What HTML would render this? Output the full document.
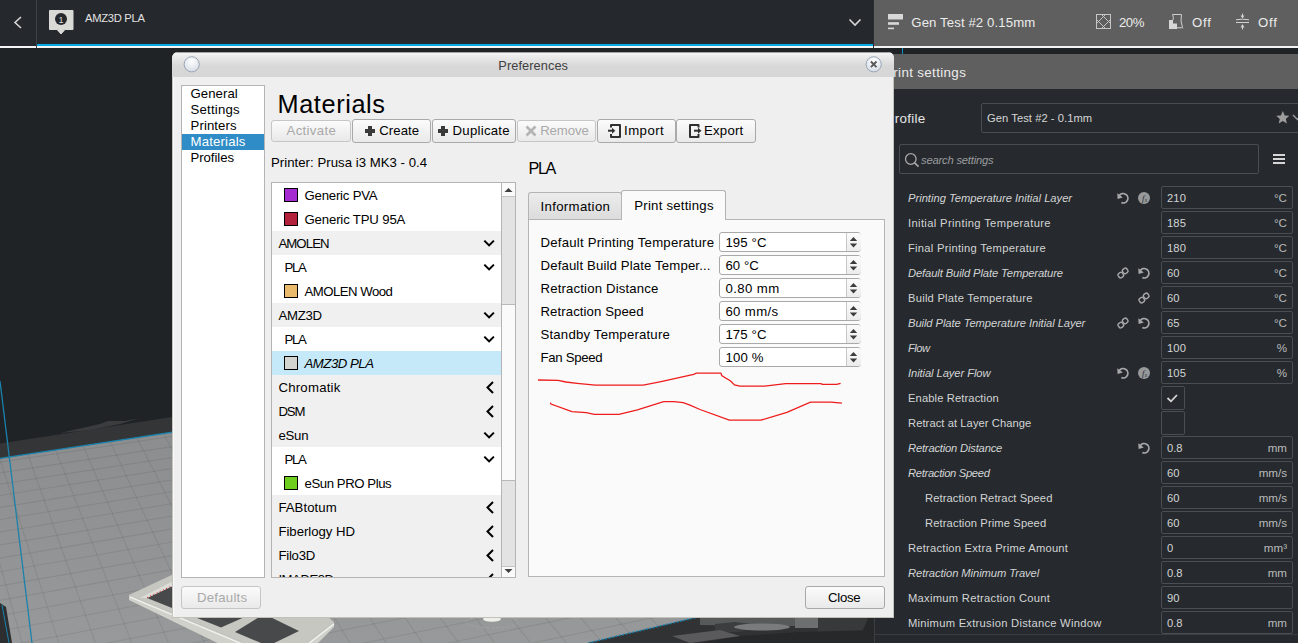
<!DOCTYPE html>
<html><head><meta charset="utf-8">
<style>
html,body{margin:0;padding:0;width:1298px;height:643px;overflow:hidden;background:#1f2326;font-family:"Liberation Sans",sans-serif;}
.a{position:absolute;}
.t{position:absolute;white-space:nowrap;line-height:1;}
svg{position:absolute;overflow:visible;}
</style></head><body>

<svg style="left:0;top:0" width="1298" height="643">
<defs><linearGradient id="flg" x1="0" y1="430" x2="0" y2="643" gradientUnits="userSpaceOnUse"><stop offset="0" stop-color="#8c8d8e"/><stop offset="1" stop-color="#98999a"/></linearGradient><clipPath id="fl"><polygon points="0,458.4 172,432.3 700,352 700,617 588,643 0,643"/></clipPath></defs>
<polygon points="0,443.5 172,417 874,310 874,643 0,643" fill="#333537"/>
<polygon points="60,433 100,424 108,421 125,421 140,418 120,424 90,430" fill="#3b3c3e"/>
<polygon points="0,458.4 172,432.3 700,352 700,617 588,643 0,643" fill="url(#flg)"/>
<g clip-path="url(#fl)" stroke="#000" stroke-opacity="0.075" stroke-width="1.1" fill="none">
<line x1="-198.3" y1="253.8" x2="-124.2" y2="1035.7"/>\n<line x1="-176.5" y1="251.6" x2="-74.3" y2="1022.6"/>\n<line x1="-154.8" y1="249.4" x2="-25.4" y2="1009.7"/>\n<line x1="-133.4" y1="247.2" x2="22.5" y2="997.1"/>\n<line x1="-112.1" y1="245.0" x2="69.5" y2="984.7"/>\n<line x1="-91.0" y1="242.9" x2="115.5" y2="972.6"/>\n<line x1="-70.1" y1="240.7" x2="160.7" y2="960.7"/>\n<line x1="-49.4" y1="238.6" x2="205.0" y2="949.0"/>\n<line x1="-28.8" y1="236.5" x2="248.4" y2="937.6"/>\n<line x1="-8.4" y1="234.4" x2="291.1" y2="926.4"/>\n<line x1="11.8" y1="232.4" x2="332.9" y2="915.4"/>\n<line x1="31.8" y1="230.3" x2="373.9" y2="904.5"/>\n<line x1="51.7" y1="228.3" x2="414.2" y2="893.9"/>\n<line x1="71.4" y1="226.3" x2="453.8" y2="883.5"/>\n<line x1="91.0" y1="224.3" x2="492.7" y2="873.3"/>\n<line x1="110.3" y1="222.3" x2="530.9" y2="863.2"/>\n<line x1="129.6" y1="220.3" x2="568.4" y2="853.4"/>\n<line x1="148.6" y1="218.4" x2="605.2" y2="843.7"/>\n<line x1="167.5" y1="216.5" x2="641.4" y2="834.1"/>\n<line x1="186.3" y1="214.5" x2="677.0" y2="824.8"/>\n<line x1="204.9" y1="212.6" x2="711.9" y2="815.6"/>\n<line x1="223.3" y1="210.8" x2="746.3" y2="806.5"/>\n<line x1="241.6" y1="208.9" x2="780.1" y2="797.6"/>\n<line x1="259.8" y1="207.0" x2="813.3" y2="788.9"/>\n<line x1="277.8" y1="205.2" x2="846.0" y2="780.2"/>\n<line x1="295.7" y1="203.4" x2="878.2" y2="771.8"/>\n<line x1="313.4" y1="201.6" x2="909.8" y2="763.5"/>\n<line x1="331.0" y1="199.8" x2="940.9" y2="755.3"/>\n<line x1="348.4" y1="198.0" x2="971.6" y2="747.2"/>\n<line x1="365.8" y1="196.2" x2="1001.7" y2="739.3"/>\n<line x1="382.9" y1="194.5" x2="1031.4" y2="731.4"/>\n<line x1="400.0" y1="192.7" x2="1060.6" y2="723.8"/>\n<line x1="416.9" y1="191.0" x2="1089.3" y2="716.2"/>\n<line x1="433.7" y1="189.3" x2="1117.6" y2="708.7"/>\n<line x1="450.3" y1="187.6" x2="1145.5" y2="701.4"/>\n<line x1="466.9" y1="185.9" x2="1173.0" y2="694.2"/>\n<line x1="483.3" y1="184.2" x2="1200.0" y2="687.0"/>\n<line x1="499.5" y1="182.6" x2="1226.6" y2="680.0"/>\n<line x1="515.7" y1="180.9" x2="1252.9" y2="673.1"/>\n<line x1="531.7" y1="179.3" x2="1278.7" y2="666.3"/>\n<line x1="547.6" y1="177.6" x2="1304.2" y2="659.6"/>\n<line x1="563.4" y1="176.0" x2="1329.3" y2="653.0"/>\n<line x1="579.1" y1="174.4" x2="1354.1" y2="646.5"/>\n<line x1="594.7" y1="172.8" x2="1378.5" y2="640.0"/>\n<line x1="610.1" y1="171.3" x2="1402.5" y2="633.7"/>\n<line x1="625.4" y1="169.7" x2="1426.3" y2="627.5"/>\n<line x1="640.6" y1="168.1" x2="1449.6" y2="621.3"/>\n<line x1="655.7" y1="166.6" x2="1472.7" y2="615.2"/>\n<line x1="670.7" y1="165.1" x2="1495.4" y2="609.3"/>\n<line x1="685.6" y1="163.5" x2="1517.9" y2="603.3"/>\n<line x1="700.4" y1="162.0" x2="1540.0" y2="597.5"/>\n<line x1="715.1" y1="160.5" x2="1561.8" y2="591.8"/>\n<line x1="729.7" y1="159.1" x2="1583.4" y2="586.1"/>\n<line x1="-284.7" y1="210.3" x2="867.2" y2="104.6"/>\n<line x1="-285.0" y1="215.1" x2="874.9" y2="107.6"/>\n<line x1="-285.3" y1="220.1" x2="882.7" y2="110.6"/>\n<line x1="-285.5" y1="225.1" x2="890.6" y2="113.7"/>\n<line x1="-285.8" y1="230.2" x2="898.6" y2="116.9"/>\n<line x1="-286.1" y1="235.4" x2="906.8" y2="120.0"/>\n<line x1="-286.4" y1="240.7" x2="915.0" y2="123.3"/>\n<line x1="-286.7" y1="246.1" x2="923.4" y2="126.5"/>\n<line x1="-287.0" y1="251.6" x2="931.9" y2="129.8"/>\n<line x1="-287.4" y1="257.2" x2="940.5" y2="133.2"/>\n<line x1="-287.7" y1="263.0" x2="949.3" y2="136.6"/>\n<line x1="-288.0" y1="268.8" x2="958.2" y2="140.1"/>\n<line x1="-288.3" y1="274.7" x2="967.2" y2="143.6"/>\n<line x1="-288.7" y1="280.8" x2="976.3" y2="147.2"/>\n<line x1="-289.0" y1="287.0" x2="985.6" y2="150.8"/>\n<line x1="-289.4" y1="293.3" x2="995.0" y2="154.5"/>\n<line x1="-289.8" y1="299.8" x2="1004.6" y2="158.2"/>\n<line x1="-290.1" y1="306.3" x2="1014.3" y2="162.0"/>\n<line x1="-290.5" y1="313.0" x2="1024.2" y2="165.8"/>\n<line x1="-290.9" y1="319.9" x2="1034.2" y2="169.8"/>\n<line x1="-291.3" y1="326.9" x2="1044.4" y2="173.7"/>\n<line x1="-291.7" y1="334.1" x2="1054.7" y2="177.8"/>\n<line x1="-292.1" y1="341.4" x2="1065.2" y2="181.9"/>\n<line x1="-292.5" y1="348.9" x2="1075.9" y2="186.0"/>\n<line x1="-293.0" y1="356.5" x2="1086.7" y2="190.3"/>\n<line x1="-293.4" y1="364.3" x2="1097.8" y2="194.6"/>\n<line x1="-293.9" y1="372.3" x2="1109.0" y2="199.0"/>\n<line x1="-294.3" y1="380.5" x2="1120.4" y2="203.4"/>\n<line x1="-294.8" y1="388.9" x2="1132.0" y2="207.9"/>\n<line x1="-295.3" y1="397.5" x2="1143.8" y2="212.5"/>\n<line x1="-295.8" y1="406.3" x2="1155.8" y2="217.2"/>\n<line x1="-296.3" y1="415.2" x2="1168.0" y2="222.0"/>\n<line x1="-296.8" y1="424.5" x2="1180.4" y2="226.8"/>\n<line x1="-297.3" y1="433.9" x2="1193.0" y2="231.7"/>\n<line x1="-297.9" y1="443.6" x2="1205.9" y2="236.8"/>\n<line x1="-298.5" y1="453.5" x2="1219.0" y2="241.9"/>\n<line x1="-299.0" y1="463.7" x2="1232.3" y2="247.1"/>\n<line x1="-299.6" y1="474.2" x2="1245.9" y2="252.4"/>\n<line x1="-300.2" y1="484.9" x2="1259.7" y2="257.8"/>\n<line x1="-300.9" y1="495.9" x2="1273.7" y2="263.3"/>\n<line x1="-301.5" y1="507.3" x2="1288.1" y2="268.9"/>\n<line x1="-302.2" y1="518.9" x2="1302.7" y2="274.6"/>\n<line x1="-302.8" y1="530.9" x2="1317.6" y2="280.4"/>\n<line x1="-303.5" y1="543.2" x2="1332.8" y2="286.3"/>\n<line x1="-304.2" y1="555.9" x2="1348.2" y2="292.3"/>\n<line x1="-305.0" y1="568.9" x2="1364.0" y2="298.5"/>\n<line x1="-305.7" y1="582.3" x2="1380.1" y2="304.8"/>\n<line x1="-306.5" y1="596.1" x2="1396.5" y2="311.2"/>\n<line x1="-307.3" y1="610.4" x2="1413.3" y2="317.7"/>\n<line x1="-308.2" y1="625.1" x2="1430.4" y2="324.4"/>\n<line x1="-309.0" y1="640.3" x2="1447.8" y2="331.2"/>\n<line x1="-309.9" y1="655.9" x2="1465.6" y2="338.1"/>\n<line x1="-310.8" y1="672.1" x2="1483.8" y2="345.2"/>\n<line x1="-311.8" y1="688.8" x2="1502.4" y2="352.5"/>\n<line x1="-312.7" y1="706.1" x2="1521.4" y2="359.9"/>\n<line x1="-313.7" y1="723.9" x2="1540.8" y2="367.5"/>\n<line x1="-314.8" y1="742.4" x2="1560.6" y2="375.2"/>\n<line x1="-315.9" y1="761.5" x2="1580.8" y2="383.1"/>\n<line x1="-317.0" y1="781.4" x2="1601.6" y2="391.2"/>\n<line x1="-318.1" y1="801.9" x2="1622.8" y2="399.5"/>\n<line x1="-319.4" y1="823.3" x2="1644.4" y2="407.9"/>\n<line x1="-320.6" y1="845.4" x2="1666.6" y2="416.6"/>\n<line x1="-321.9" y1="868.5" x2="1689.3" y2="425.5"/>\n<line x1="-323.3" y1="892.4" x2="1712.6" y2="434.5"/>\n<line x1="-324.7" y1="917.3" x2="1736.4" y2="443.8"/>\n<line x1="-326.1" y1="943.3" x2="1760.8" y2="453.4"/>\n<line x1="-327.7" y1="970.3" x2="1785.9" y2="463.1"/>\n<line x1="-329.3" y1="998.6" x2="1811.5" y2="473.1"/>\n<line x1="-330.9" y1="1028.0" x2="1837.8" y2="483.4"/>\n<line x1="-332.7" y1="1058.8" x2="1864.8" y2="493.9"/>\n<line x1="-334.5" y1="1091.1" x2="1892.4" y2="504.7"/>\n<line x1="-336.4" y1="1124.8" x2="1920.9" y2="515.8"/>\n</g>
<line x1="0" y1="458.4" x2="700" y2="352" stroke="#1a82ac" stroke-width="1.3"/>
<line x1="0" y1="381" x2="32" y2="643" stroke="#1a82ac" stroke-width="1.3"/>
<polygon points="0,603 6,607 12,643 0,643" fill="#2c2e30"/><line x1="2" y1="605" x2="9" y2="643" stroke="#1a82ac" stroke-width="1"/>
<polygon points="129,595 240,543 334,622 285,660" fill="#c6c7c1"/>
<polygon points="129,595 285,660 285,676 129,600" fill="#d0d1cb"/>
<polygon points="334,622 285,660 285,676 334,627" fill="#d0d1cb"/>
<line x1="130" y1="597" x2="285" y2="662" stroke="#f4f4f0" stroke-width="1.3"/>
<line x1="334" y1="624" x2="285" y2="662" stroke="#f4f4f0" stroke-width="1.3"/>
<polygon points="147,598 200,573 290,597 221,627.5" fill="#48494b"/>
<polygon points="140,598 147,598 190,578 185,575" fill="#dcdcd8"/>
<polygon points="264,614 299,631 268,646 235,632" fill="#48494b"/>
<line x1="147" y1="597.5" x2="190" y2="577.5" stroke="#e01010" stroke-width="1" stroke-dasharray="1 2.5"/>
<ellipse cx="492" cy="619" rx="9" ry="2.8" fill="#eeeeea"/><ellipse cx="492" cy="622" rx="26" ry="6" fill="none" stroke="#a4a4a4" stroke-width="1" stroke-dasharray="3 2"/>
<polygon points="588,643 698,617 874,617 874,643" fill="#313234"/>
<polygon points="700,617 874,617 874,626 780,626 700,625" fill="#58595b"/>
<polygon points="715,624 735,622 760,625 740,632 715,632" fill="#3c3d3f"/>
<ellipse cx="762" cy="627" rx="28" ry="3.5" fill="#7a7b7c"/>
<rect x="795" y="617" width="23" height="11" fill="#6e6f70"/>
<polygon points="818,617 868,617 861,635 818,636" fill="#38393b"/>
<polygon points="868,617 874,617 874,643 858,643" fill="#26282a"/>
<polygon points="700,643 740,636 800,632 874,630 874,643" fill="#262829"/>
<polygon points="672,636 720,630 740,636 690,643" fill="#5a5a5c"/>
<line x1="588" y1="643" x2="698" y2="617" stroke="#1a82ac" stroke-width="1.5" stroke-dasharray="2 1.5"/>
</svg>

<!-- TOP BAR -->
<div class="a" style="left:0;top:0;width:873px;height:44px;background:#25282c"></div>
<div class="a" style="left:0;top:44px;width:36px;height:2px;background:#25282c"></div>
<div class="a" style="left:36px;top:0;width:1px;height:48px;background:#3e4145"></div>
<div class="a" style="left:37px;top:44px;width:836px;height:2px;background:#06a9e6"></div>
<div class="a" style="left:0;top:46px;width:36px;height:2px;background:#f4f4f4"></div>
<div class="a" style="left:37px;top:46px;width:1261px;height:2px;background:#f4f4f4"></div>
<div class="a" style="left:873px;top:0;width:425px;height:46px;background:#5f5f5f"></div>
<div class="a" style="left:873px;top:0;width:1px;height:48px;background:#2b2d30"></div>

<svg style="left:0;top:0" width="60" height="48"><path d="M21 17 L15 22.5 L21 28" fill="none" stroke="#d6d6d6" stroke-width="1.6"/></svg>
<svg style="left:48;top:9px;left:48px" width="27" height="27">
  <path d="M1.5 1.5 H25 V20.5 H17 L13 25 L9 20.5 H1.5 Z" fill="#d9dad6" stroke="#d9dad6" stroke-width="1" stroke-linejoin="round"/>
  <circle cx="13" cy="10" r="6" fill="#25282c"/>
  <text x="13" y="14" font-size="9" text-anchor="middle" fill="#d9dad6" font-family="Liberation Sans">1</text>
</svg>
<svg style="left:845px;top:14px" width="20" height="16"><path d="M4.5 5.5 L10 11 L15.5 5.5" fill="none" stroke="#d6d6d6" stroke-width="1.6"/></svg>

<!-- grey header right icons -->
<svg style="left:886px;top:12px" width="20" height="20">
  <rect x="2" y="2" width="15" height="5.5" fill="#d8d8d8"/>
  <rect x="2" y="10.2" width="11" height="2.6" fill="#d8d8d8"/>
  <rect x="2" y="15.6" width="6" height="1.6" fill="#d8d8d8"/>
</svg>
<svg style="left:1096px;top:14px" width="16" height="16">
  <g fill="none" stroke="#d2d2d2" stroke-width="1" opacity="0.9">
  <rect x="0.5" y="0.5" width="14" height="14"/>
  <path d="M5.5 0.5 L14.5 9.5 M0.5 5.5 L9.5 14.5 M9.5 0.5 L0.5 9.5 M14.5 5.5 L5.5 14.5"/>
  </g>
</svg>
<svg style="left:1168px;top:13px" width="17" height="17">
  <path d="M4.5 1.5 H13.5 Q12 8 14.5 14.5 H9" fill="none" stroke="#cfcfcf" stroke-width="1"/>
  <path d="M4.5 1.5 Q6 5 5 7" fill="none" stroke="#cfcfcf" stroke-width="1"/>
  <path d="M1 7 H5 V10.5 H9 V16 H1 Z" fill="#d6d6d6"/>
  <path d="M9 14.5 H15.5 V15.5 H9 Z" fill="#9a9a9a"/>
</svg>
<svg style="left:1235px;top:13px" width="16" height="18">
  <path d="M1 6.8 Q7.5 5.5 14 6.8 M1 9.5 H14" fill="none" stroke="#d2d2d2" stroke-width="1"/>
  <path d="M7.5 0.5 V4" stroke="#d2d2d2" stroke-width="1"/>
  <path d="M5.5 2.5 L7.5 5.5 L9.5 2.5 Z" fill="#d2d2d2"/>
  <path d="M7.5 12.5 V16.5" stroke="#d2d2d2" stroke-width="1"/>
  <path d="M5.5 14.5 L7.5 11 L9.5 14.5 Z" fill="#d2d2d2"/>
</svg>

<!-- RIGHT PANEL -->
<div class="a" style="left:874px;top:48px;width:424px;height:6px;background:#1f2326"></div>
<div class="a" style="left:902px;top:48px;width:1px;height:6px;background:#0a8fc0"></div>
<div class="a" style="left:874px;top:54px;width:424px;height:35px;background:#5f5f5f"></div>
<div class="a" style="left:874px;top:89px;width:424px;height:554px;background:#262a2e"></div>
<div class="a" style="left:874px;top:89px;width:1px;height:554px;background:#3a3d41"></div>
<div class="a" style="left:874px;top:634px;width:424px;height:1px;background:#3a3d41"></div>
<div class="a" style="left:981px;top:103px;width:330px;height:28px;border:1px solid #4a4d51;border-radius:2px;background:#262a2e"></div>
<svg style="left:1275px;top:110px" width="16" height="16"><path d="M7.8 1 L9.7 5.4 L14.3 5.8 L10.8 8.9 L11.9 13.6 L7.8 11.1 L3.7 13.6 L4.8 8.9 L1.3 5.8 L5.9 5.4 Z" fill="#9d9d9d"/></svg><svg style="left:1290px;top:110px" width="10" height="16"><path d="M3 5 L7.5 9.5 L12 5" fill="none" stroke="#9d9d9d" stroke-width="1.4"/></svg>
<div class="a" style="left:899px;top:144px;width:358px;height:28px;border:1px solid #4a4d51;border-radius:2px;background:#262a2e"></div>
<svg style="left:902px;top:150px" width="20" height="20"><circle cx="8.8" cy="9" r="5.3" fill="none" stroke="#a8a8a8" stroke-width="1.3"/><path d="M12.6 12.8 L16.6 16.6" stroke="#a8a8a8" stroke-width="1.6"/></svg>
<svg style="left:1271px;top:152px" width="16" height="14"><rect x="2" y="2" width="12" height="2" fill="#d6d6d6"/><rect x="2" y="6" width="12" height="2" fill="#d6d6d6"/><rect x="2" y="10" width="12" height="2" fill="#d6d6d6"/></svg>

<div class="t" style="left:85px;top:13px;font-size:11.2px;color:#e2e2e2;letter-spacing:-0.289px;">AMZ3D PLA</div>
<div class="t" style="left:911.3px;top:16px;font-size:13.2px;color:#ececec;letter-spacing:0.102px;">Gen Test #2 0.15mm</div>
<div class="t" style="left:1119px;top:16px;font-size:13.2px;color:#ececec;letter-spacing:-0.521px;">20%</div>
<div class="t" style="left:1192px;top:16px;font-size:13.2px;color:#ececec;letter-spacing:0.757px;">Off</div>
<div class="t" style="left:1258px;top:16px;font-size:13.2px;color:#ececec;letter-spacing:0.757px;">Off</div>
<div class="t" style="left:884px;top:66px;font-size:13.4px;color:#ececec;letter-spacing:0.340px;">Print settings</div>
<div class="t" style="left:885.5px;top:112px;font-size:13.4px;color:#e6e6e6;letter-spacing:0.278px;">Profile</div>
<div class="t" style="left:987px;top:113px;font-size:11.2px;color:#d6d6d6;letter-spacing:0.052px;">Gen Test #2 - 0.1mm</div>
<div class="t" style="left:921px;top:155px;font-size:11.2px;color:#9a9c9e;letter-spacing:-0.186px;font-style:italic;">search settings</div>

<div class="t" style="left:908px;top:193px;font-size:11.2px;color:#d3d4d5;letter-spacing:-0.009px;font-style:italic;">Printing Temperature Initial Layer</div>
<svg style="left:1117px;top:192px" width="12" height="12"><path d="M2.3 3.6 A4.7 4.7 0 1 1 4.4 10.6" fill="none" stroke="#a6a8aa" stroke-width="1.7"/><path d="M0.3 1.3 L0.6 7 L5.8 5.6 Z" fill="#a6a8aa"/></svg>
<svg style="left:1138px;top:192px" width="12" height="12"><circle cx="6" cy="6" r="6" fill="#97999b"/><text x="5.2" y="9.3" font-size="9" font-style="italic" text-anchor="middle" fill="#2b2e31" font-family="Liberation Serif">f</text><text x="7.9" y="10.3" font-size="5.5" font-style="italic" text-anchor="middle" fill="#2b2e31" font-family="Liberation Serif">x</text></svg>
<div class="a" style="left:1161px;top:186px;width:130px;height:21px;border:1px solid #4a4d51;border-radius:2px;background:#262a2e"></div>
<div class="t" style="left:1167px;top:193px;font-size:11.2px;color:#d3d4d5;letter-spacing:0.095px;">210</div>
<div class="t" style="right:11px;top:192.18px;font-size:11.6px;color:#b9babb">°C</div>
<div class="t" style="left:908px;top:218px;font-size:11.2px;color:#d3d4d5;letter-spacing:0.359px;">Initial Printing Temperature</div>
<div class="a" style="left:1161px;top:211px;width:130px;height:21px;border:1px solid #4a4d51;border-radius:2px;background:#262a2e"></div>
<div class="t" style="left:1167px;top:218px;font-size:11.2px;color:#d3d4d5;letter-spacing:0.095px;">185</div>
<div class="t" style="right:11px;top:217.18px;font-size:11.6px;color:#b9babb">°C</div>
<div class="t" style="left:908px;top:243px;font-size:11.2px;color:#d3d4d5;letter-spacing:0.269px;">Final Printing Temperature</div>
<div class="a" style="left:1161px;top:236px;width:130px;height:21px;border:1px solid #4a4d51;border-radius:2px;background:#262a2e"></div>
<div class="t" style="left:1167px;top:243px;font-size:11.2px;color:#d3d4d5;letter-spacing:0.095px;">180</div>
<div class="t" style="right:11px;top:242.18px;font-size:11.6px;color:#b9babb">°C</div>
<div class="t" style="left:908px;top:268px;font-size:11.2px;color:#d3d4d5;letter-spacing:-0.103px;font-style:italic;">Default Build Plate Temperature</div>
<svg style="left:1117px;top:267px" width="12" height="12"><g fill="none" stroke="#a6a8aa" stroke-width="1.4"><rect x="1.3" y="5.6" width="5" height="5" rx="1.6" transform="rotate(-35 3.8 8.1)"/><rect x="5.7" y="1.4" width="5" height="5" rx="1.6" transform="rotate(-35 8.2 3.9)"/></g></svg>
<svg style="left:1138px;top:267px" width="12" height="12"><path d="M2.3 3.6 A4.7 4.7 0 1 1 4.4 10.6" fill="none" stroke="#a6a8aa" stroke-width="1.7"/><path d="M0.3 1.3 L0.6 7 L5.8 5.6 Z" fill="#a6a8aa"/></svg>
<div class="a" style="left:1161px;top:261px;width:130px;height:21px;border:1px solid #4a4d51;border-radius:2px;background:#262a2e"></div>
<div class="t" style="left:1167px;top:268px;font-size:11.2px;color:#d3d4d5;letter-spacing:0.126px;">60</div>
<div class="t" style="right:11px;top:267.18px;font-size:11.6px;color:#b9babb">°C</div>
<div class="t" style="left:908px;top:293px;font-size:11.2px;color:#d3d4d5;letter-spacing:0.237px;">Build Plate Temperature</div>
<svg style="left:1138px;top:292px" width="12" height="12"><g fill="none" stroke="#a6a8aa" stroke-width="1.4"><rect x="1.3" y="5.6" width="5" height="5" rx="1.6" transform="rotate(-35 3.8 8.1)"/><rect x="5.7" y="1.4" width="5" height="5" rx="1.6" transform="rotate(-35 8.2 3.9)"/></g></svg>
<div class="a" style="left:1161px;top:286px;width:130px;height:21px;border:1px solid #4a4d51;border-radius:2px;background:#262a2e"></div>
<div class="t" style="left:1167px;top:293px;font-size:11.2px;color:#d3d4d5;letter-spacing:0.126px;">60</div>
<div class="t" style="right:11px;top:292.18px;font-size:11.6px;color:#b9babb">°C</div>
<div class="t" style="left:908px;top:318px;font-size:11.2px;color:#d3d4d5;letter-spacing:-0.072px;font-style:italic;">Build Plate Temperature Initial Layer</div>
<svg style="left:1117px;top:317px" width="12" height="12"><g fill="none" stroke="#a6a8aa" stroke-width="1.4"><rect x="1.3" y="5.6" width="5" height="5" rx="1.6" transform="rotate(-35 3.8 8.1)"/><rect x="5.7" y="1.4" width="5" height="5" rx="1.6" transform="rotate(-35 8.2 3.9)"/></g></svg>
<svg style="left:1138px;top:317px" width="12" height="12"><path d="M2.3 3.6 A4.7 4.7 0 1 1 4.4 10.6" fill="none" stroke="#a6a8aa" stroke-width="1.7"/><path d="M0.3 1.3 L0.6 7 L5.8 5.6 Z" fill="#a6a8aa"/></svg>
<div class="a" style="left:1161px;top:311px;width:130px;height:21px;border:1px solid #4a4d51;border-radius:2px;background:#262a2e"></div>
<div class="t" style="left:1167px;top:318px;font-size:11.2px;color:#d3d4d5;letter-spacing:0.126px;">65</div>
<div class="t" style="right:11px;top:317.18px;font-size:11.6px;color:#b9babb">°C</div>
<div class="t" style="left:908px;top:343px;font-size:11.2px;color:#d3d4d5;letter-spacing:-0.546px;font-style:italic;">Flow</div>
<div class="a" style="left:1161px;top:336px;width:130px;height:21px;border:1px solid #4a4d51;border-radius:2px;background:#262a2e"></div>
<div class="t" style="left:1167px;top:343px;font-size:11.2px;color:#d3d4d5;letter-spacing:0.095px;">100</div>
<div class="t" style="right:11px;top:342.18px;font-size:11.6px;color:#b9babb">%</div>
<div class="t" style="left:908px;top:368px;font-size:11.2px;color:#d3d4d5;letter-spacing:-0.085px;font-style:italic;">Initial Layer Flow</div>
<svg style="left:1117px;top:367px" width="12" height="12"><path d="M2.3 3.6 A4.7 4.7 0 1 1 4.4 10.6" fill="none" stroke="#a6a8aa" stroke-width="1.7"/><path d="M0.3 1.3 L0.6 7 L5.8 5.6 Z" fill="#a6a8aa"/></svg>
<svg style="left:1138px;top:367px" width="12" height="12"><circle cx="6" cy="6" r="6" fill="#97999b"/><text x="5.2" y="9.3" font-size="9" font-style="italic" text-anchor="middle" fill="#2b2e31" font-family="Liberation Serif">f</text><text x="7.9" y="10.3" font-size="5.5" font-style="italic" text-anchor="middle" fill="#2b2e31" font-family="Liberation Serif">x</text></svg>
<div class="a" style="left:1161px;top:361px;width:130px;height:21px;border:1px solid #4a4d51;border-radius:2px;background:#262a2e"></div>
<div class="t" style="left:1167px;top:368px;font-size:11.2px;color:#d3d4d5;letter-spacing:0.095px;">105</div>
<div class="t" style="right:11px;top:367.18px;font-size:11.6px;color:#b9babb">%</div>
<div class="t" style="left:908px;top:393px;font-size:11.2px;color:#d3d4d5;letter-spacing:0.111px;">Enable Retraction</div>
<div class="a" style="left:1161px;top:386px;width:22px;height:22px;border:1px solid #4a4d51;border-radius:2px;background:#262a2e"></div>
<svg style="left:1165px;top:391px" width="16" height="14"><path d="M2.5 7 L6 10.3 L12 4" fill="none" stroke="#d4d4d4" stroke-width="1.8"/></svg>
<div class="t" style="left:908px;top:418px;font-size:11.2px;color:#d3d4d5;letter-spacing:0.065px;">Retract at Layer Change</div>
<div class="a" style="left:1161px;top:411px;width:22px;height:22px;border:1px solid #4a4d51;border-radius:2px;background:#262a2e"></div>
<div class="t" style="left:908px;top:443px;font-size:11.2px;color:#d3d4d5;letter-spacing:-0.185px;font-style:italic;">Retraction Distance</div>
<svg style="left:1138px;top:442px" width="12" height="12"><path d="M2.3 3.6 A4.7 4.7 0 1 1 4.4 10.6" fill="none" stroke="#a6a8aa" stroke-width="1.7"/><path d="M0.3 1.3 L0.6 7 L5.8 5.6 Z" fill="#a6a8aa"/></svg>
<div class="a" style="left:1161px;top:436px;width:130px;height:21px;border:1px solid #4a4d51;border-radius:2px;background:#262a2e"></div>
<div class="t" style="left:1167px;top:443px;font-size:11.2px;color:#d3d4d5;letter-spacing:-0.018px;">0.8</div>
<div class="t" style="right:11px;top:442.18px;font-size:11.6px;color:#b9babb">mm</div>
<div class="t" style="left:908px;top:468px;font-size:11.2px;color:#d3d4d5;letter-spacing:-0.302px;font-style:italic;">Retraction Speed</div>
<div class="a" style="left:1161px;top:461px;width:130px;height:21px;border:1px solid #4a4d51;border-radius:2px;background:#262a2e"></div>
<div class="t" style="left:1167px;top:468px;font-size:11.2px;color:#d3d4d5;letter-spacing:0.126px;">60</div>
<div class="t" style="right:11px;top:467.18px;font-size:11.6px;color:#b9babb">mm/s</div>
<div class="t" style="left:925px;top:493px;font-size:11.2px;color:#d3d4d5;letter-spacing:0.076px;">Retraction Retract Speed</div>
<div class="a" style="left:1161px;top:486px;width:130px;height:21px;border:1px solid #4a4d51;border-radius:2px;background:#262a2e"></div>
<div class="t" style="left:1167px;top:493px;font-size:11.2px;color:#d3d4d5;letter-spacing:0.126px;">60</div>
<div class="t" style="right:11px;top:492.18px;font-size:11.6px;color:#b9babb">mm/s</div>
<div class="t" style="left:925px;top:518px;font-size:11.2px;color:#d3d4d5;letter-spacing:0.113px;">Retraction Prime Speed</div>
<div class="a" style="left:1161px;top:511px;width:130px;height:21px;border:1px solid #4a4d51;border-radius:2px;background:#262a2e"></div>
<div class="t" style="left:1167px;top:518px;font-size:11.2px;color:#d3d4d5;letter-spacing:0.126px;">60</div>
<div class="t" style="right:11px;top:517.18px;font-size:11.6px;color:#b9babb">mm/s</div>
<div class="t" style="left:908px;top:543px;font-size:11.2px;color:#d3d4d5;letter-spacing:0.226px;">Retraction Extra Prime Amount</div>
<div class="a" style="left:1161px;top:536px;width:130px;height:21px;border:1px solid #4a4d51;border-radius:2px;background:#262a2e"></div>
<div class="t" style="left:1167px;top:543px;font-size:11.2px;color:#d3d4d5;">0</div>
<div class="t" style="right:11px;top:542.18px;font-size:11.6px;color:#b9babb">mm³</div>
<div class="t" style="left:908px;top:568px;font-size:11.2px;color:#d3d4d5;letter-spacing:-0.068px;font-style:italic;">Retraction Minimum Travel</div>
<div class="a" style="left:1161px;top:561px;width:130px;height:21px;border:1px solid #4a4d51;border-radius:2px;background:#262a2e"></div>
<div class="t" style="left:1167px;top:568px;font-size:11.2px;color:#d3d4d5;letter-spacing:-0.018px;">0.8</div>
<div class="t" style="right:11px;top:567.18px;font-size:11.6px;color:#b9babb">mm</div>
<div class="t" style="left:908px;top:593px;font-size:11.2px;color:#d3d4d5;letter-spacing:0.279px;">Maximum Retraction Count</div>
<div class="a" style="left:1161px;top:586px;width:130px;height:21px;border:1px solid #4a4d51;border-radius:2px;background:#262a2e"></div>
<div class="t" style="left:1167px;top:593px;font-size:11.2px;color:#d3d4d5;letter-spacing:0.126px;">90</div>
<div class="t" style="left:908px;top:618px;font-size:11.2px;color:#d3d4d5;letter-spacing:0.269px;">Minimum Extrusion Distance Window</div>
<div class="a" style="left:1161px;top:611px;width:130px;height:21px;border:1px solid #4a4d51;border-radius:2px;background:#262a2e"></div>
<div class="t" style="left:1167px;top:618px;font-size:11.2px;color:#d3d4d5;letter-spacing:-0.018px;">0.8</div>
<div class="t" style="right:11px;top:617.18px;font-size:11.6px;color:#b9babb">mm</div>


<!-- DIALOG -->
<div class="a" style="left:172px;top:52px;width:722px;height:566px;box-sizing:border-box;background:#efefef;border:1px solid #c2c2ba;border-top:none;box-shadow:inset 1px 0 0 #fafafa;border-radius:6px 6px 0 0"></div>
<div class="a" style="left:172px;top:52px;width:722px;height:25px;background:linear-gradient(#a4a4a4 0px,#a4a4a4 1px,#f4f4f4 1px,#e8e8e8 6px,#d8d8d8 14px,#d6d6d6 25px);border-radius:6px 6px 0 0"></div>
<svg style="left:182px;top:55px" width="20" height="20"><defs><radialGradient id="cb" cx="50%" cy="30%" r="70%"><stop offset="0" stop-color="#ffffff"/><stop offset="1" stop-color="#d6dce6"/></radialGradient></defs><circle cx="9.7" cy="9.3" r="7.6" fill="url(#cb)" stroke="#9aa6b4" stroke-width="1"/></svg>
<svg style="left:864px;top:55px" width="20" height="20"><circle cx="9.7" cy="9.3" r="7.6" fill="url(#cb)" stroke="#9aa6b4" stroke-width="1"/><path d="M6.9 6.5 L12.5 12.1 M12.5 6.5 L6.9 12.1" stroke="#585858" stroke-width="1.9"/></svg>
<div class="t" style="left:498.3px;top:60px;font-size:12.8px;color:#404040;letter-spacing:0.068px;">Preferences</div>
<div class="a" style="left:181px;top:85px;width:82px;height:491px;border:1px solid #b4b4b4;background:#ffffff"></div>
<div class="a" style="left:182px;top:134px;width:82px;height:16px;background:#308cc6"></div>
<div class="t" style="left:190.5px;top:87px;font-size:13.2px;color:#000000;letter-spacing:0.055px;">General</div>
<div class="t" style="left:190.5px;top:103px;font-size:13.2px;color:#000000;letter-spacing:0.217px;">Settings</div>
<div class="t" style="left:190.5px;top:119px;font-size:13.2px;color:#000000;letter-spacing:0.099px;">Printers</div>
<div class="t" style="left:190.5px;top:135px;font-size:13.2px;color:#ffffff;letter-spacing:0.181px;">Materials</div>
<div class="t" style="left:190.5px;top:151px;font-size:13.2px;color:#000000;letter-spacing:-0.064px;">Profiles</div>
<div class="t" style="left:277.5px;top:92px;font-size:25.3px;color:#000000;letter-spacing:0.606px;">Materials</div>
<div class="a" style="left:271px;top:120px;width:78px;height:20px;border:1px solid #c6c6c6;border-radius:3px;background:linear-gradient(#fbfbfb,#e9e9e9)"></div>
<div class="t" style="left:286.6px;top:124px;font-size:13.2px;color:#a9a9a9;letter-spacing:0.318px;">Activate</div>
<div class="a" style="left:352px;top:119px;width:77px;height:22px;border:1px solid #a9a9a9;border-radius:3px;background:linear-gradient(#fbfbfb,#e9e9e9)"></div>
<svg style="left:365px;top:126px" width="10" height="10"><path d="M3 0H7V3H10V7H7V10H3V7H0V3H3Z" fill="#3a3a3a"/></svg>
<div class="t" style="left:379.3px;top:124px;font-size:13.2px;color:#000000;letter-spacing:0.051px;">Create</div>
<div class="a" style="left:432px;top:119px;width:82px;height:22px;border:1px solid #a9a9a9;border-radius:3px;background:linear-gradient(#fbfbfb,#e9e9e9)"></div>
<svg style="left:438px;top:126px" width="10" height="10"><path d="M3 0H7V3H10V7H7V10H3V7H0V3H3Z" fill="#3a3a3a"/></svg>
<div class="t" style="left:452.5px;top:124px;font-size:13.2px;color:#000000;letter-spacing:0.268px;">Duplicate</div>
<div class="a" style="left:517px;top:120px;width:77px;height:20px;border:1px solid #c6c6c6;border-radius:3px;background:linear-gradient(#fbfbfb,#e9e9e9)"></div>
<svg style="left:525px;top:125px" width="12" height="12"><path d="M1.5 1.5 L10.5 10.5 M10.5 1.5 L1.5 10.5" stroke="#b4b4b4" stroke-width="2.6"/></svg>
<div class="t" style="left:540.2px;top:124px;font-size:13.2px;color:#a9a9a9;letter-spacing:-0.091px;">Remove</div>
<div class="a" style="left:597px;top:119px;width:77px;height:22px;border:1px solid #a9a9a9;border-radius:3px;background:linear-gradient(#fbfbfb,#e9e9e9)"></div>
<svg style="left:608px;top:124px" width="14" height="14"><path d="M3 3.5 V1 H12 V13 H3 V10" fill="none" stroke="#303030" stroke-width="2" stroke-linejoin="round"/><path d="M0 6.7 H4.5" stroke="#303030" stroke-width="2"/><path d="M4 3.7 L7.3 6.7 L4 9.7 Z" fill="#303030"/></svg>
<div class="t" style="left:624px;top:124px;font-size:13.2px;color:#000000;letter-spacing:0.483px;">Import</div>
<div class="a" style="left:676px;top:119px;width:78px;height:22px;border:1px solid #a9a9a9;border-radius:3px;background:linear-gradient(#fbfbfb,#e9e9e9)"></div>
<svg style="left:689px;top:124px" width="14" height="14"><path d="M9.5 3.5 V1 H1 V13 H9.5 V10" fill="none" stroke="#303030" stroke-width="2" stroke-linejoin="round"/><path d="M5 6.7 H9.5" stroke="#303030" stroke-width="2"/><path d="M9 3.7 L12.5 6.7 L9 9.7 Z" fill="#303030"/></svg>
<div class="t" style="left:704px;top:124px;font-size:13.2px;color:#000000;letter-spacing:0.226px;">Export</div>
<div class="t" style="left:271px;top:156px;font-size:13.2px;color:#000000;letter-spacing:0.027px;">Printer: Prusa i3 MK3 - 0.4</div>
<div class="a" style="left:271px;top:182px;width:243px;height:394px;border:1px solid #b4b4b4;background:#ffffff;overflow:hidden"></div>
<div class="a" style="left:272px;top:183px;width:229px;height:394px;overflow:hidden">
<div class="a" style="left:0;top:0px;width:229px;height:24px;background:#ffffff"></div>
<div class="a" style="left:12px;top:5px;width:12px;height:12px;border:1px solid #000;background:#a52bd0"></div>
<div class="t" style="left:32.5px;top:6px;font-size:13.2px;color:#000;letter-spacing:-0.208px;">Generic PVA</div>
<div class="a" style="left:0;top:24px;width:229px;height:24px;background:#ffffff"></div>
<div class="a" style="left:12px;top:29px;width:12px;height:12px;border:1px solid #000;background:#b3223c"></div>
<div class="t" style="left:32.5px;top:30px;font-size:13.2px;color:#000;letter-spacing:-0.158px;">Generic TPU 95A</div>
<div class="a" style="left:0;top:48px;width:229px;height:24px;background:#f0f0f0"></div>
<div class="t" style="left:6.4px;top:54px;font-size:13.2px;color:#000;letter-spacing:-0.899px;">AMOLEN</div>
<svg style="left:210.5px;top:55px" width="14" height="10"><path d="M1.3 2.6 L6.1 7.4 L10.9 2.6" fill="none" stroke="#000" stroke-width="2"/></svg>
<div class="a" style="left:0;top:72px;width:229px;height:24px;background:#ffffff"></div>
<div class="t" style="left:12.5px;top:78px;font-size:13.2px;color:#000;letter-spacing:-1.272px;">PLA</div>
<svg style="left:210.5px;top:79px" width="14" height="10"><path d="M1.3 2.6 L6.1 7.4 L10.9 2.6" fill="none" stroke="#000" stroke-width="2"/></svg>
<div class="a" style="left:0;top:96px;width:229px;height:24px;background:#ffffff"></div>
<div class="a" style="left:12px;top:101px;width:12px;height:12px;border:1px solid #000;background:#e9b96c"></div>
<div class="t" style="left:32.5px;top:102px;font-size:13.2px;color:#000;letter-spacing:-0.513px;">AMOLEN Wood</div>
<div class="a" style="left:0;top:120px;width:229px;height:24px;background:#f0f0f0"></div>
<div class="t" style="left:6.4px;top:126px;font-size:13.2px;color:#000;letter-spacing:-0.270px;">AMZ3D</div>
<svg style="left:210.5px;top:127px" width="14" height="10"><path d="M1.3 2.6 L6.1 7.4 L10.9 2.6" fill="none" stroke="#000" stroke-width="2"/></svg>
<div class="a" style="left:0;top:144px;width:229px;height:24px;background:#ffffff"></div>
<div class="t" style="left:12.5px;top:150px;font-size:13.2px;color:#000;letter-spacing:-1.272px;">PLA</div>
<svg style="left:210.5px;top:151px" width="14" height="10"><path d="M1.3 2.6 L6.1 7.4 L10.9 2.6" fill="none" stroke="#000" stroke-width="2"/></svg>
<div class="a" style="left:0;top:168px;width:229px;height:24px;background:#c5e9f9"></div>
<div class="a" style="left:12px;top:173px;width:12px;height:12px;border:1px solid #000;background:#d3d5d0"></div>
<div class="t" style="left:32.5px;top:174px;font-size:13.2px;color:#000;letter-spacing:-0.469px;font-style:italic;">AMZ3D PLA</div>
<div class="a" style="left:0;top:192px;width:229px;height:24px;background:#f0f0f0"></div>
<div class="t" style="left:6.4px;top:198px;font-size:13.2px;color:#000;letter-spacing:0.235px;">Chromatik</div>
<svg style="left:212.5px;top:198px" width="10" height="14"><path d="M8 1 L2.5 6.5 L8 12" fill="none" stroke="#000" stroke-width="2"/></svg>
<div class="a" style="left:0;top:216px;width:229px;height:24px;background:#f0f0f0"></div>
<div class="t" style="left:6.4px;top:222px;font-size:13.2px;color:#000;letter-spacing:-1.061px;">DSM</div>
<svg style="left:212.5px;top:222px" width="10" height="14"><path d="M8 1 L2.5 6.5 L8 12" fill="none" stroke="#000" stroke-width="2"/></svg>
<div class="a" style="left:0;top:240px;width:229px;height:24px;background:#f0f0f0"></div>
<div class="t" style="left:6.4px;top:246px;font-size:13.2px;color:#000;letter-spacing:-0.206px;">eSun</div>
<svg style="left:210.5px;top:247px" width="14" height="10"><path d="M1.3 2.6 L6.1 7.4 L10.9 2.6" fill="none" stroke="#000" stroke-width="2"/></svg>
<div class="a" style="left:0;top:264px;width:229px;height:24px;background:#ffffff"></div>
<div class="t" style="left:12.5px;top:270px;font-size:13.2px;color:#000;letter-spacing:-1.272px;">PLA</div>
<svg style="left:210.5px;top:271px" width="14" height="10"><path d="M1.3 2.6 L6.1 7.4 L10.9 2.6" fill="none" stroke="#000" stroke-width="2"/></svg>
<div class="a" style="left:0;top:288px;width:229px;height:24px;background:#ffffff"></div>
<div class="a" style="left:12px;top:293px;width:12px;height:12px;border:1px solid #000;background:#6fcf1f"></div>
<div class="t" style="left:32.5px;top:294px;font-size:13.2px;color:#000;letter-spacing:-0.430px;">eSun PRO Plus</div>
<div class="a" style="left:0;top:312px;width:229px;height:24px;background:#f0f0f0"></div>
<div class="t" style="left:6.4px;top:318px;font-size:13.2px;color:#000;letter-spacing:0.047px;">FABtotum</div>
<svg style="left:212.5px;top:318px" width="10" height="14"><path d="M8 1 L2.5 6.5 L8 12" fill="none" stroke="#000" stroke-width="2"/></svg>
<div class="a" style="left:0;top:336px;width:229px;height:24px;background:#f0f0f0"></div>
<div class="t" style="left:6.4px;top:342px;font-size:13.2px;color:#000;letter-spacing:-0.023px;">Fiberlogy HD</div>
<svg style="left:212.5px;top:342px" width="10" height="14"><path d="M8 1 L2.5 6.5 L8 12" fill="none" stroke="#000" stroke-width="2"/></svg>
<div class="a" style="left:0;top:360px;width:229px;height:24px;background:#f0f0f0"></div>
<div class="t" style="left:6.4px;top:366px;font-size:13.2px;color:#000;letter-spacing:-0.246px;">Filo3D</div>
<svg style="left:212.5px;top:366px" width="10" height="14"><path d="M8 1 L2.5 6.5 L8 12" fill="none" stroke="#000" stroke-width="2"/></svg>
<div class="a" style="left:0;top:384px;width:229px;height:24px;background:#f0f0f0"></div>
<div class="t" style="left:6.4px;top:390px;font-size:13.2px;color:#000;letter-spacing:-0.480px;">IMADE3D</div>
<svg style="left:212.5px;top:390px" width="10" height="14"><path d="M8 1 L2.5 6.5 L8 12" fill="none" stroke="#000" stroke-width="2"/></svg>
</div>
<div class="a" style="left:501px;top:183px;width:1px;height:394px;background:#b4b4b4"></div>
<div class="a" style="left:502px;top:183px;width:13px;height:394px;background:#e3e3e3"></div>
<div class="a" style="left:502px;top:183px;width:13px;height:13px;background:#fafafa"></div>
<div class="a" style="left:502px;top:196px;width:13px;height:1px;background:#c4c4c4"></div>
<div class="a" style="left:502px;top:304px;width:13px;height:177px;background:#fafafa;border-top:1px solid #b8b8b8;border-bottom:1px solid #b8b8b8;box-sizing:border-box"></div>
<div class="a" style="left:502px;top:566px;width:13px;height:10px;background:#fafafa;border-top:1px solid #c4c4c4"></div>
<svg style="left:502px;top:184px" width="13" height="12"><path d="M2.5 8 L6.5 4 L10.5 8 Z" fill="#404040"/></svg>
<svg style="left:502px;top:567px" width="13" height="10"><path d="M2.5 2 L6.5 6 L10.5 2 Z" fill="#404040"/></svg>
<div class="t" style="left:528.6px;top:160px;font-size:16.2px;color:#000000;letter-spacing:-1.447px;">PLA</div>
<div class="a" style="left:528px;top:192px;width:93px;height:27px;border:1px solid #b4b4b4;border-bottom:none;border-radius:3px 3px 0 0;background:linear-gradient(#ececec,#dcdcdc);box-sizing:border-box;width:94px"></div>
<div class="a" style="left:528px;top:219px;width:355px;height:356px;border:1px solid #b4b4b4;background:#fafafa"></div>
<div class="a" style="left:621px;top:190px;width:105px;height:30px;border:1px solid #b4b4b4;border-bottom:none;border-radius:3px 3px 0 0;background:#fafafa;box-sizing:border-box"></div>
<div class="t" style="left:540.5px;top:200px;font-size:13.2px;color:#000;letter-spacing:0.343px;">Information</div>
<div class="t" style="left:634.3px;top:199px;font-size:13.2px;color:#000;letter-spacing:0.229px;">Print settings</div>
<div class="t" style="left:540.5px;top:236px;font-size:13.2px;color:#000;letter-spacing:0.217px;">Default Printing Temperature</div>
<div class="a" style="left:719px;top:232px;width:140px;height:18px;border:1px solid #a9a9a9;border-radius:3px;background:#ffffff"></div>
<div class="a" style="left:846px;top:233px;width:14px;height:18px;border-left:1px solid #c8c8c8;background:linear-gradient(#fbfbfb,#ececec);border-radius:0 2px 2px 0"></div>
<svg style="left:847px;top:234px" width="13" height="16"><path d="M2.8 7 L6.5 3 L10.2 7 Z M2.8 9.5 L6.5 13.5 L10.2 9.5 Z" fill="#3c3c3c"/></svg>
<div class="t" style="left:725.4px;top:236px;font-size:13.2px;color:#000;letter-spacing:0.119px;">195 °C</div>
<div class="t" style="left:540.5px;top:259px;font-size:13.2px;color:#000;letter-spacing:0.134px;">Default Build Plate Temper...</div>
<div class="a" style="left:719px;top:255px;width:140px;height:18px;border:1px solid #a9a9a9;border-radius:3px;background:#ffffff"></div>
<div class="a" style="left:846px;top:256px;width:14px;height:18px;border-left:1px solid #c8c8c8;background:linear-gradient(#fbfbfb,#ececec);border-radius:0 2px 2px 0"></div>
<svg style="left:847px;top:257px" width="13" height="16"><path d="M2.8 7 L6.5 3 L10.2 7 Z M2.8 9.5 L6.5 13.5 L10.2 9.5 Z" fill="#3c3c3c"/></svg>
<div class="t" style="left:725.4px;top:259px;font-size:13.2px;color:#000;letter-spacing:0.075px;">60 °C</div>
<div class="t" style="left:540.5px;top:282px;font-size:13.2px;color:#000;letter-spacing:0.159px;">Retraction Distance</div>
<div class="a" style="left:719px;top:278px;width:140px;height:18px;border:1px solid #a9a9a9;border-radius:3px;background:#ffffff"></div>
<div class="a" style="left:846px;top:279px;width:14px;height:18px;border-left:1px solid #c8c8c8;background:linear-gradient(#fbfbfb,#ececec);border-radius:0 2px 2px 0"></div>
<svg style="left:847px;top:280px" width="13" height="16"><path d="M2.8 7 L6.5 3 L10.2 7 Z M2.8 9.5 L6.5 13.5 L10.2 9.5 Z" fill="#3c3c3c"/></svg>
<div class="t" style="left:725.4px;top:282px;font-size:13.2px;color:#000;letter-spacing:0.426px;">0.80 mm</div>
<div class="t" style="left:540.5px;top:305px;font-size:13.2px;color:#000;letter-spacing:0.079px;">Retraction Speed</div>
<div class="a" style="left:719px;top:301px;width:140px;height:18px;border:1px solid #a9a9a9;border-radius:3px;background:#ffffff"></div>
<div class="a" style="left:846px;top:302px;width:14px;height:18px;border-left:1px solid #c8c8c8;background:linear-gradient(#fbfbfb,#ececec);border-radius:0 2px 2px 0"></div>
<svg style="left:847px;top:303px" width="13" height="16"><path d="M2.8 7 L6.5 3 L10.2 7 Z M2.8 9.5 L6.5 13.5 L10.2 9.5 Z" fill="#3c3c3c"/></svg>
<div class="t" style="left:725.4px;top:305px;font-size:13.2px;color:#000;letter-spacing:0.358px;">60 mm/s</div>
<div class="t" style="left:540.5px;top:328px;font-size:13.2px;color:#000;letter-spacing:0.193px;">Standby Temperature</div>
<div class="a" style="left:719px;top:324px;width:140px;height:18px;border:1px solid #a9a9a9;border-radius:3px;background:#ffffff"></div>
<div class="a" style="left:846px;top:325px;width:14px;height:18px;border-left:1px solid #c8c8c8;background:linear-gradient(#fbfbfb,#ececec);border-radius:0 2px 2px 0"></div>
<svg style="left:847px;top:326px" width="13" height="16"><path d="M2.8 7 L6.5 3 L10.2 7 Z M2.8 9.5 L6.5 13.5 L10.2 9.5 Z" fill="#3c3c3c"/></svg>
<div class="t" style="left:725.4px;top:328px;font-size:13.2px;color:#000;letter-spacing:0.119px;">175 °C</div>
<div class="t" style="left:540.5px;top:351px;font-size:13.2px;color:#000;letter-spacing:-0.299px;">Fan Speed</div>
<div class="a" style="left:719px;top:347px;width:140px;height:18px;border:1px solid #a9a9a9;border-radius:3px;background:#ffffff"></div>
<div class="a" style="left:846px;top:348px;width:14px;height:18px;border-left:1px solid #c8c8c8;background:linear-gradient(#fbfbfb,#ececec);border-radius:0 2px 2px 0"></div>
<svg style="left:847px;top:349px" width="13" height="16"><path d="M2.8 7 L6.5 3 L10.2 7 Z M2.8 9.5 L6.5 13.5 L10.2 9.5 Z" fill="#3c3c3c"/></svg>
<div class="t" style="left:725.4px;top:351px;font-size:13.2px;color:#000;letter-spacing:0.173px;">100 %</div>
<svg style="left:0;top:0" width="1298" height="643"><polyline points="538,380 558,380.3 566,382 577,383.3 595.5,385.1 643.3,385.1 661,381.6 693.7,374.4 696.3,373.1 720.8,373.1 722,375.7 730.6,381 734.5,384.9 739.8,386.2 764.7,386.2 785.6,383.6 821,383.6 822.3,384.4 836.7,384.4 840.6,383.3" fill="none" stroke="#ee1c1c" stroke-width="1.3"/><polyline points="550.3,402.6 551,404 571.9,411.7 586.3,412.7 594.2,414.4 619,414.4 637.4,409.8 663.6,401.6 674,401.6 683.2,402.6 690,405.2 700,409.5 729.3,420.2 760.7,420.2 786.9,412.4 810.5,402.2 830.8,402.2 841.9,403.2" fill="none" stroke="#ee1c1c" stroke-width="1.3"/></svg>
<div class="a" style="left:181px;top:586px;width:78px;height:21px;border:1px solid #c6c6c6;border-radius:3px;background:linear-gradient(#fbfbfb,#e9e9e9)"></div>
<div class="t" style="left:197px;top:591px;font-size:13.2px;color:#a9a9a9;letter-spacing:0.239px;">Defaults</div>
<div class="a" style="left:805px;top:586px;width:78px;height:21px;border:1px solid #a9a9a9;border-radius:3px;background:linear-gradient(#fbfbfb,#e9e9e9)"></div>
<div class="t" style="left:828px;top:591px;font-size:13.2px;color:#000;letter-spacing:-0.265px;">Close</div>


</body></html>
